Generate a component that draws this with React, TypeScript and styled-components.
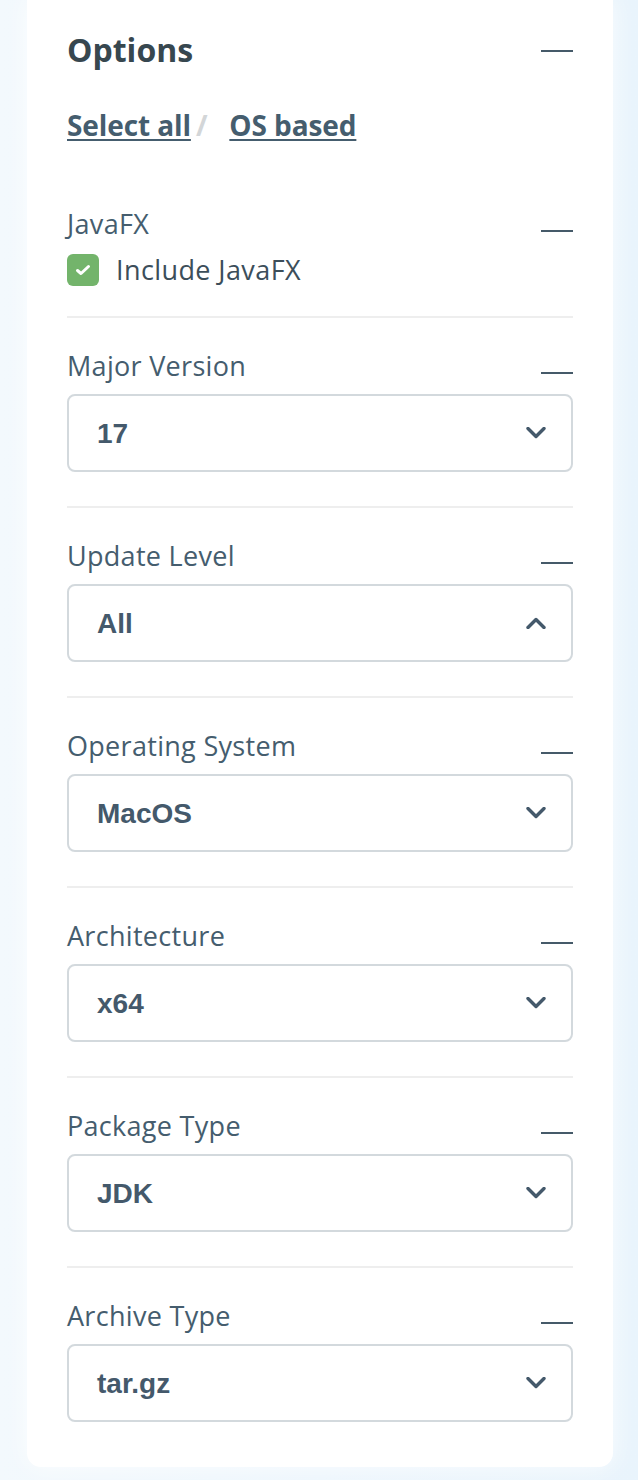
import React from "react";
import styled, { createGlobalStyle } from "styled-components";

const GlobalStyle = createGlobalStyle`
  html, body {
    margin: 0;
    padding: 0;
    background: #edf6fd;
  }
  body {
    font-family: "Open Sans", "Noto Sans", sans-serif;
  }
`;

const Page = styled.div`
  padding: 0 25px 13px 27px;
  background: linear-gradient(90deg, #f3f9fd 0%, #edf6fd 50%, #e9f4fc 100%);
`;

const Card = styled.div`
  background: #ffffff;
  border-radius: 0 0 14px 14px;
  padding: 30px 40px 45px;
  box-shadow: 0 0 24px rgba(255, 255, 255, 0.8);
`;

const HeaderRow = styled.div`
  display: flex;
  align-items: center;
  justify-content: space-between;
`;

const Title = styled.h2`
  margin: 0;
  font-size: 32px;
  line-height: 40px;
  font-weight: 700;
  color: #37474f;
`;

const Collapse = styled.span<{ $offset?: number }>`
  display: block;
  width: 32px;
  height: 2px;
  background: #455a69;
  margin-top: ${(p) => p.$offset ?? 0}px;
`;

const LinkRow = styled.div`
  display: flex;
  align-items: baseline;
  margin-top: 37px;
  font-size: 28px;
  line-height: 36px;
  font-weight: 700;
  letter-spacing: -0.1px;
`;

const TextLink = styled.a`
  color: #455d6e;
  text-decoration: underline;
  text-decoration-thickness: 2px;
  text-underline-offset: 3px;
  cursor: pointer;
`;

const Slash = styled.span`
  color: #d3d6d8;
  margin: 0 22px 0 5px;
`;

const Section = styled.div<{ $first?: boolean }>`
  padding: ${(p) => (p.$first ? "63px 0 28px" : "30px 0 34px")};
  border-bottom: 2px solid #eeeeee;
  &:last-child {
    border-bottom: none;
    padding-bottom: 0;
  }
`;

const LabelRow = styled.div`
  display: flex;
  align-items: center;
  justify-content: space-between;
`;

const Label = styled.span`
  font-size: 27px;
  line-height: 36px;
  letter-spacing: 0.3px;
  color: #455d6e;
`;

const CheckRow = styled.label`
  display: flex;
  align-items: center;
  gap: 17px;
  margin-top: 10px;
  font-size: 27px;
  line-height: 36px;
  letter-spacing: 0.4px;
  color: #3c4e5a;
`;

const CheckBox = styled.span`
  width: 32px;
  height: 32px;
  border-radius: 6px;
  background: #73b46b;
  display: flex;
  align-items: center;
  justify-content: center;
`;

const Select = styled.div`
  margin-top: 10px;
  height: 74px;
  border: 2px solid #d3d9dd;
  border-radius: 8px;
  display: flex;
  align-items: center;
  justify-content: space-between;
  padding: 0 24px 0 28px;
`;

const Value = styled.span`
  font-family: "Liberation Sans", Arial, sans-serif;
  font-weight: 700;
  font-size: 28px;
  padding-top: 2px;
  color: #44596b;
`;

const Chevron = ({ up }: { up?: boolean }) => (
  <svg width="22" height="12" viewBox="0 0 22 12" fill="none">
    <path
      d={up ? "M3 10.5 L11 2.5 L19 10.5" : "M3 1.5 L11 9.5 L19 1.5"}
      stroke="#44596b"
      strokeWidth="3.4"
      strokeLinecap="round"
      strokeLinejoin="round"
    />
  </svg>
);

const Check = () => (
  <svg width="16" height="12" viewBox="0 0 16 12" fill="none">
    <path
      d="M2.5 6.5 L6 9.5 L13.5 2.5"
      stroke="#ffffff"
      strokeWidth="3"
      strokeLinecap="round"
      strokeLinejoin="round"
    />
  </svg>
);

const selects = [
  { label: "Major Version", value: "17" },
  { label: "Update Level", value: "All", open: true },
  { label: "Operating System", value: "MacOS" },
  { label: "Architecture", value: "x64" },
  { label: "Package Type", value: "JDK" },
  { label: "Archive Type", value: "tar.gz" },
];

export default function App() {
  return (
    <>
      <GlobalStyle />
      <Page>
        <Card>
          <HeaderRow>
            <Title>Options</Title>
            <Collapse $offset={2} />
          </HeaderRow>
          <LinkRow>
            <TextLink>Select all</TextLink>
            <Slash>/</Slash>
            <TextLink>OS based</TextLink>
          </LinkRow>

          <Section $first>
            <LabelRow>
              <Label>JavaFX</Label>
              <Collapse $offset={14} />
            </LabelRow>
            <CheckRow>
              <CheckBox>
                <Check />
              </CheckBox>
              Include JavaFX
            </CheckRow>
          </Section>

          {selects.map((s) => (
            <Section key={s.label}>
              <LabelRow>
                <Label>{s.label}</Label>
                <Collapse $offset={14} />
              </LabelRow>
              <Select>
                <Value>{s.value}</Value>
                <Chevron up={s.open} />
              </Select>
            </Section>
          ))}
        </Card>
      </Page>
    </>
  );
}
